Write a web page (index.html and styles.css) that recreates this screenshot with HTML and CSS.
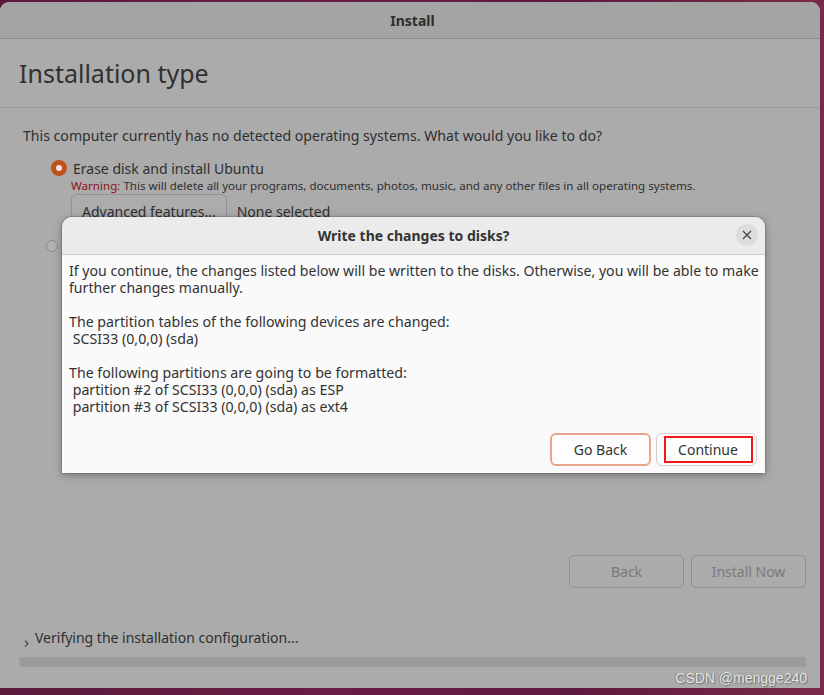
FILE: index.html
```html
<!DOCTYPE html>
<html>
<head>
<meta charset="utf-8">
<link rel="stylesheet" href="styles.css">
</head>
<body>
<div class="window">
  <div class="headerbar">Install</div>
  <div class="pagetitle">Installation type</div>
  <div class="content">
    <p class="question">This computer currently has no detected operating systems. What would you like to do?</p>
    <div class="option">
      <span class="radio on"></span>
      <span class="optlabel">Erase disk and install Ubuntu</span>
    </div>
    <div class="warning"><span class="warn">Warning:</span> This will delete all your programs, documents, photos, music, and any other files in all operating systems.</div>
    <div class="advrow">
      <span class="advbtn">Advanced features...</span>
      <span class="none">None selected</span>
    </div>
    <div class="option second">
      <span class="radio"></span>
    </div>
    <div class="spacer"></div>
    <div class="navrow">
      <span class="navbtn back">Back</span>
      <span class="navbtn install">Install Now</span>
    </div>
    <div class="progress">
      <div class="verify"><span class="chev">&#8250;</span><span>Verifying the installation configuration...</span></div>
      <div class="bar"></div>
    </div>
  </div>
  <div class="watermark">CSDN @mengge240</div>

  <div class="dialog">
    <div class="dhead">
      <span class="dtitle">Write the changes to disks?</span>
      <span class="close"><svg width="10" height="10" viewBox="0 0 10 10"><path d="M1 1L9 9M9 1L1 9" stroke="#444" stroke-width="1.3" fill="none"/></svg></span>
    </div>
    <div class="dbody">
      <p class="intro">If you continue, the changes listed below will be written to the disks. Otherwise, you will be able to make<br>further changes manually.</p>
      <p>The partition tables of the following devices are changed:<br>&nbsp;SCSI33 (0,0,0) (sda)</p>
      <p>The following partitions are going to be formatted:<br>&nbsp;partition #2 of SCSI33 (0,0,0) (sda) as ESP<br>&nbsp;partition #3 of SCSI33 (0,0,0) (sda) as ext4</p>
    </div>
    <div class="dactions">
      <span class="dbtn goback">Go Back</span>
      <span class="dbtn cont"><span class="mark">Continue</span></span>
    </div>
  </div>
</div>
</body>
</html>
```
FILE: styles.css
```css
html, body {
  margin: 0;
  padding: 0;
}
body {
  width: 824px;
  height: 695px;
  overflow: hidden;
  background: linear-gradient(90deg, #5a1a3c 0%, #6a1d44 40%, #5e1a3e 70%, #7a2a48 100%);
  font-family: "Noto Sans", "DejaVu Sans", sans-serif;
  color: #2f2f2f;
  padding-top: 2px;
}
.window {
  position: relative;
  width: 820px;
  height: 686px;
  background: #ababab;
  border-radius: 9px 9px 0 0;
  display: flex;
  flex-direction: column;
  overflow: hidden;
}
.headerbar {
  height: 36px;
  background: #a4a4a4;
  border-bottom: 1px solid #8d8d8d;
  display: flex;
  align-items: center;
  justify-content: center;
  padding-left: 5px;
  font-weight: bold;
  font-size: 14px;
  color: #2e2e2e;
}
.pagetitle {
  height: 68px;
  border-bottom: 1px solid #9d9d9d;
  display: flex;
  align-items: center;
  padding-left: 19px;
  font-size: 25px;
  color: #303030;
}
.content {
  flex: 1;
  display: flex;
  flex-direction: column;
  padding: 0 14px 0 19px;
}
.question {
  margin: 18px 0 0 4px;
  font-size: 14.1px;
  line-height: 20px;
}
.option {
  display: flex;
  align-items: center;
  margin: 12px 0 0 32px;
  height: 20px;
}
.radio {
  width: 12px;
  height: 12px;
  border-radius: 50%;
  border: 1px solid #8d8d8d;
  background: #b2b2b2;
  box-sizing: border-box;
  margin-right: 6px;
}
.radio.on {
  width: 16px;
  height: 16px;
  border: 5px solid #c4501e;
  background: #e8e8e8;
}
.optlabel {
  font-size: 14px;
}
.warning {
  margin: 0 0 0 52px;
  font-size: 11.6px;
  line-height: 16px;
  color: #2f2f2f;
}
.warn {
  color: #8c1414;
}
.advrow {
  display: flex;
  align-items: center;
  margin: 0 0 0 52px;
  height: 34px;
}
.advbtn {
  height: 34px;
  box-sizing: border-box;
  border: 1px solid #939393;
  border-radius: 5px;
  padding: 0 10px;
  display: flex;
  align-items: center;
  font-size: 14px;
  background: #acacac;
}
.none {
  margin-left: 10px;
  font-size: 14px;
}
.option.second {
  margin: 8px 0 0 27px;
}
.spacer {
  flex: 1;
}
.navrow {
  display: flex;
  justify-content: flex-end;
  gap: 7px;
  margin-bottom: 39px;
}
.navbtn {
  width: 115px;
  height: 33px;
  box-sizing: border-box;
  border: 1px solid #909090;
  border-radius: 5px;
  display: flex;
  align-items: center;
  justify-content: center;
  font-size: 14px;
  color: #7a7a7a;
}
.progress {
  margin-bottom: 21px;
}
.verify {
  display: flex;
  align-items: center;
  font-size: 14px;
  height: 20px;
}
.chev {
  font-size: 16px;
  margin: 10px 6px 0 5px;
  color: #444;
}
.bar {
  margin-top: 10px;
  height: 10px;
  border-radius: 3px;
  background: #9b9b9b;
}
.watermark {
  position: absolute;
  right: 13px;
  bottom: 2px;
  font-family: "Liberation Sans", Arial, sans-serif;
  font-size: 14px;
  color: #e6e6e6;
  text-shadow: 1px 1px 1px #707070, -1px 0 0 #8a8a8a;
}
.dialog {
  position: absolute;
  left: 62px;
  top: 215px;
  width: 703px;
  height: 256px;
  background: #fafafa;
  border-radius: 10px 10px 0 0;
  box-shadow: 0 2px 8px rgba(0,0,0,0.35), 0 0 0 1px rgba(0,0,0,0.12);
  display: flex;
  flex-direction: column;
  overflow: hidden;
}
.dhead {
  position: relative;
  height: 37px;
  background: #ebebeb;
  border-bottom: 1px solid #cfcfcf;
  display: flex;
  align-items: center;
  justify-content: center;
}
.dtitle {
  font-weight: bold;
  font-size: 14px;
  color: #333;
}
.close {
  position: absolute;
  right: 7px;
  top: 7px;
  width: 22px;
  height: 22px;
  border-radius: 50%;
  background: #dcdcdc;
  display: flex;
  align-items: center;
  justify-content: center;
}
.dbody {
  flex: 1;
  padding: 7px 0 0 7px;
  font-size: 14.2px;
  line-height: 17px;
  color: #333;
  white-space: nowrap;
}
.dbody p {
  margin: 0 0 17px 0;
}
.dbody .intro {
  font-size: 14.1px;
}
.dactions {
  display: flex;
  justify-content: flex-end;
  gap: 5px;
  padding: 0 8px 7px 0;
}
.dbtn {
  width: 101px;
  height: 33px;
  box-sizing: border-box;
  border-radius: 6px;
  display: flex;
  align-items: center;
  justify-content: center;
  font-size: 14px;
  color: #333;
  background: #fdfdfd;
}
.goback {
  border: 2px solid #e9a68c;
}
.cont {
  border: 1px solid #cfcfcf;
}
.mark {
  width: 89px;
  height: 27px;
  box-sizing: border-box;
  border: 2px solid #f01818;
  margin-left: 3px;
  display: flex;
  align-items: center;
  justify-content: center;
}
```
